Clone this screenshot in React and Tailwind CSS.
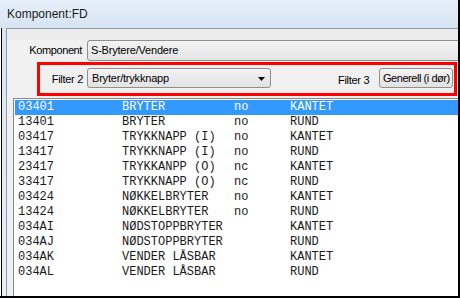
import React from "react";

const rows = [
  ["03401", "BRYTER", "no", "KANTET"],
  ["13401", "BRYTER", "no", "RUND"],
  ["03417", "TRYKKNAPP (I)", "no", "KANTET"],
  ["13417", "TRYKKNAPP (I)", "no", "RUND"],
  ["23417", "TRYKKANPP (O)", "nc", "KANTET"],
  ["33417", "TRYKKNAPP (O)", "nc", "RUND"],
  ["03424", "NØKKELBRYTER", "no", "KANTET"],
  ["13424", "NØKKELBRYTER", "no", "RUND"],
  ["034AI", "NØDSTOPPBRYTER", "", "KANTET"],
  ["034AJ", "NØDSTOPPBRYTER", "", "RUND"],
  ["034AK", "VENDER LÅSBAR", "", "KANTET"],
  ["034AL", "VENDER LÅSBAR", "", "RUND"],
];

export default function App() {
  return (
    <div className="w-[460px] h-[298px] overflow-hidden flex flex-col bg-[#f0f0f0] border-r-2 border-b-2 border-black font-['Liberation_Sans',Arial,sans-serif]">
      {/* Title bar */}
      <div className="h-[28px] shrink-0 flex items-center pl-[7px] bg-gradient-to-b from-[#e6eff9] via-[#dfeaf6] to-[#d6e3f1]">
        <span className="text-[12px] text-[#1b1b1b] leading-none">Komponent:FD</span>
      </div>
      {/* Body */}
      <div className="flex-1 flex min-h-0">
        <div className="w-[1px] bg-white" />
        <div className="w-[1px] bg-black" />
        <div className="w-[4px] bg-gradient-to-b from-[#d9e5f2] to-[#eceff2]" />
        <div className="flex-1 min-w-0 flex flex-col border-l border-t border-[#8e9aa8] bg-[#f0f0f0]">
          {/* top band */}
          <div className="h-[11px] shrink-0 bg-[#ececec]" />
          {/* Komponent row */}
          <div className="h-[21px] shrink-0 flex items-center">
            <div className="w-[75px] text-right text-[11px] text-black leading-none tracking-[-0.4px]">Komponent</div>
            <div className="ml-[5px] flex-1 -mr-[10px] h-[21px] rounded-[3px] border border-[#8e8f8f] bg-gradient-to-b from-[#f3f3f3] to-[#e4e4e4] flex items-center pl-[3px]">
              <span className="text-[11px] text-black leading-none tracking-[-0.2px]">S-Brytere/Vendere</span>
            </div>
          </div>
          {/* Red annotated filter box */}
          <div className="mt-[1px] ml-[30px] w-[420px] h-[34px] shrink-0 border-[3px] border-[#ff0000] flex items-start">
            <div className="w-[43px] mt-[9px] text-right text-[11px] text-black leading-none tracking-[-0.3px]">Filter 2</div>
            <div className="ml-[4px] mt-[3px] w-[184px] h-[20px] rounded-[3px] border border-[#8e8f8f] bg-gradient-to-b from-[#f3f3f3] to-[#e2e2e2] flex items-center pl-[4px] pr-[5px]">
              <span className="flex-1 text-[11px] text-black leading-none tracking-[-0.2px]">Bryter/trykknapp</span>
              <svg width="7" height="4" viewBox="0 0 7 4" className="mt-[1px]">
                <polygon points="0,0 7,0 3.5,4" fill="#000" />
              </svg>
            </div>
            <div className="ml-[67px] w-[41px] mt-[10px] text-[11px] text-black leading-none tracking-[-0.3px]">Filter 3</div>
            <div className="mt-[3px] w-[74px] h-[20px] rounded-[3px] border border-[#8e8f8f] bg-gradient-to-b from-[#f3f3f3] to-[#e2e2e2] flex items-center pl-[3px] overflow-hidden">
              <span className="text-[11px] text-black leading-none whitespace-nowrap tracking-[-0.45px]">Generell (i dør)</span>
            </div>
          </div>
          {/* List */}
          <div className="mt-[2px] ml-[6px] flex-1 min-h-0 border-l border-t border-[#828790] bg-white pt-[1px] pl-[1px] overflow-hidden font-['Liberation_Mono','Courier_New',monospace] text-[12px]">
            {rows.map((r, i) => (
              <div
                key={i}
                className={
                  "h-[15px] flex items-center whitespace-pre leading-[15px] pl-[3px] " +
                  (i === 0 ? "bg-[#3399ff] text-white" : "text-[#1a1a1a]")
                }
              >
                <span className="w-[104px] shrink-0">{r[0]}</span>
                <span className="w-[112px] shrink-0">{r[1]}</span>
                <span className="w-[56px] shrink-0">{r[2]}</span>
                <span>{r[3]}</span>
              </div>
            ))}
          </div>
        </div>
      </div>
    </div>
  );
}
